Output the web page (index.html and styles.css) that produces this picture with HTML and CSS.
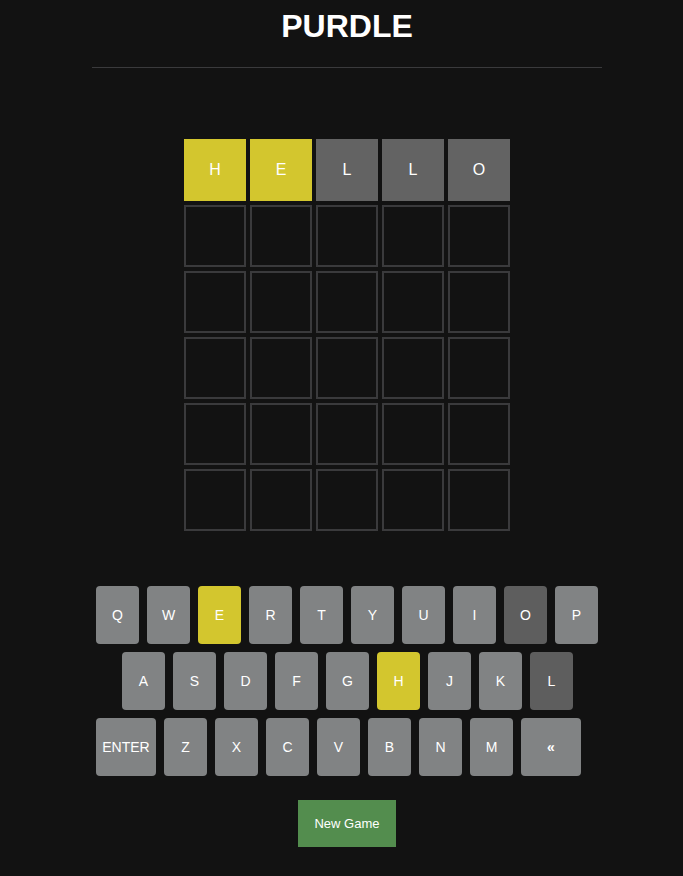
FILE: index.html
```html
<!DOCTYPE html>
<html>
<head>
<meta charset="utf-8">
<title>Purdle</title>
<link rel="stylesheet" href="styles.css">
</head>
<body>
<div class="app">
  <header class="header"><h1 class="title">PURDLE</h1></header>
  <div class="board">
    <div class="row">
      <div class="tile present">H</div><div class="tile present">E</div><div class="tile absent">L</div><div class="tile absent">L</div><div class="tile absent">O</div>
    </div>
    <div class="row"><div class="tile"></div><div class="tile"></div><div class="tile"></div><div class="tile"></div><div class="tile"></div></div>
    <div class="row"><div class="tile"></div><div class="tile"></div><div class="tile"></div><div class="tile"></div><div class="tile"></div></div>
    <div class="row"><div class="tile"></div><div class="tile"></div><div class="tile"></div><div class="tile"></div><div class="tile"></div></div>
    <div class="row"><div class="tile"></div><div class="tile"></div><div class="tile"></div><div class="tile"></div><div class="tile"></div></div>
    <div class="row"><div class="tile"></div><div class="tile"></div><div class="tile"></div><div class="tile"></div><div class="tile"></div></div>
  </div>
  <div class="keyboard">
    <div class="krow">
      <button class="key">Q</button><button class="key">W</button><button class="key present">E</button><button class="key">R</button><button class="key">T</button><button class="key">Y</button><button class="key">U</button><button class="key">I</button><button class="key absent">O</button><button class="key">P</button>
    </div>
    <div class="krow indent">
      <button class="key">A</button><button class="key">S</button><button class="key">D</button><button class="key">F</button><button class="key">G</button><button class="key present">H</button><button class="key">J</button><button class="key">K</button><button class="key absent">L</button>
    </div>
    <div class="krow">
      <button class="key wide">ENTER</button><button class="key">Z</button><button class="key">X</button><button class="key">C</button><button class="key">V</button><button class="key">B</button><button class="key">N</button><button class="key">M</button><button class="key wide back">«</button>
    </div>
  </div>
  <button class="new-game">New Game</button>
</div>
</body>
</html>
```
FILE: styles.css
```css
html, body {
  margin: 0;
  padding: 0;
  background: #121212;
}
body {
  font-family: "Liberation Sans", Arial, sans-serif;
  color: #ffffff;
}
.app {
  padding-left: 11px;
  display: flex;
  flex-direction: column;
  align-items: center;
}
.header {
  width: 510px;
  padding-top: 8px;
  height: 59px;
  border-bottom: 1px solid #3a3a3c;
  box-sizing: content-box;
}
.title {
  margin: 0;
  font-size: 32px;
  line-height: 37px;
  font-weight: bold;
  text-align: center;
}
.board {
  margin-top: 71px;
  display: flex;
  flex-direction: column;
  gap: 4px;
}
.row {
  display: flex;
  gap: 4px;
}
.tile {
  width: 62px;
  height: 62px;
  box-sizing: border-box;
  border: 2px solid #3a3a3c;
  display: flex;
  align-items: center;
  justify-content: center;
  font-size: 16px;
  color: #ffffff;
}
.tile.present {
  background: #d3c62e;
  border-color: #d3c62e;
}
.tile.absent {
  background: #636363;
  border-color: #636363;
}
.keyboard {
  margin-top: 55px;
  width: 502px;
  display: flex;
  flex-direction: column;
  align-items: flex-start;
  gap: 8px;
}
.krow {
  display: flex;
  gap: 8px;
}
.krow.indent {
  margin-left: 26px;
}
.key {
  width: 43px;
  height: 58px;
  border: none;
  border-radius: 4px;
  background: #818384;
  color: #ffffff;
  font-family: "Liberation Sans", Arial, sans-serif;
  font-size: 14px;
  padding: 0;
  display: flex;
  align-items: center;
  justify-content: center;
}
.key.wide {
  width: 60px;
}
.key.back {
  font-weight: bold;
}
.key.present {
  background: #d3c62e;
}
.key.absent {
  background: #5e5e5e;
}
.new-game {
  margin-top: 24px;
  width: 98px;
  height: 47px;
  border: none;
  border-radius: 0;
  background: #538d4e;
  color: #ffffff;
  font-family: "Liberation Sans", Arial, sans-serif;
  font-size: 13px;
  padding: 0;
}
```
